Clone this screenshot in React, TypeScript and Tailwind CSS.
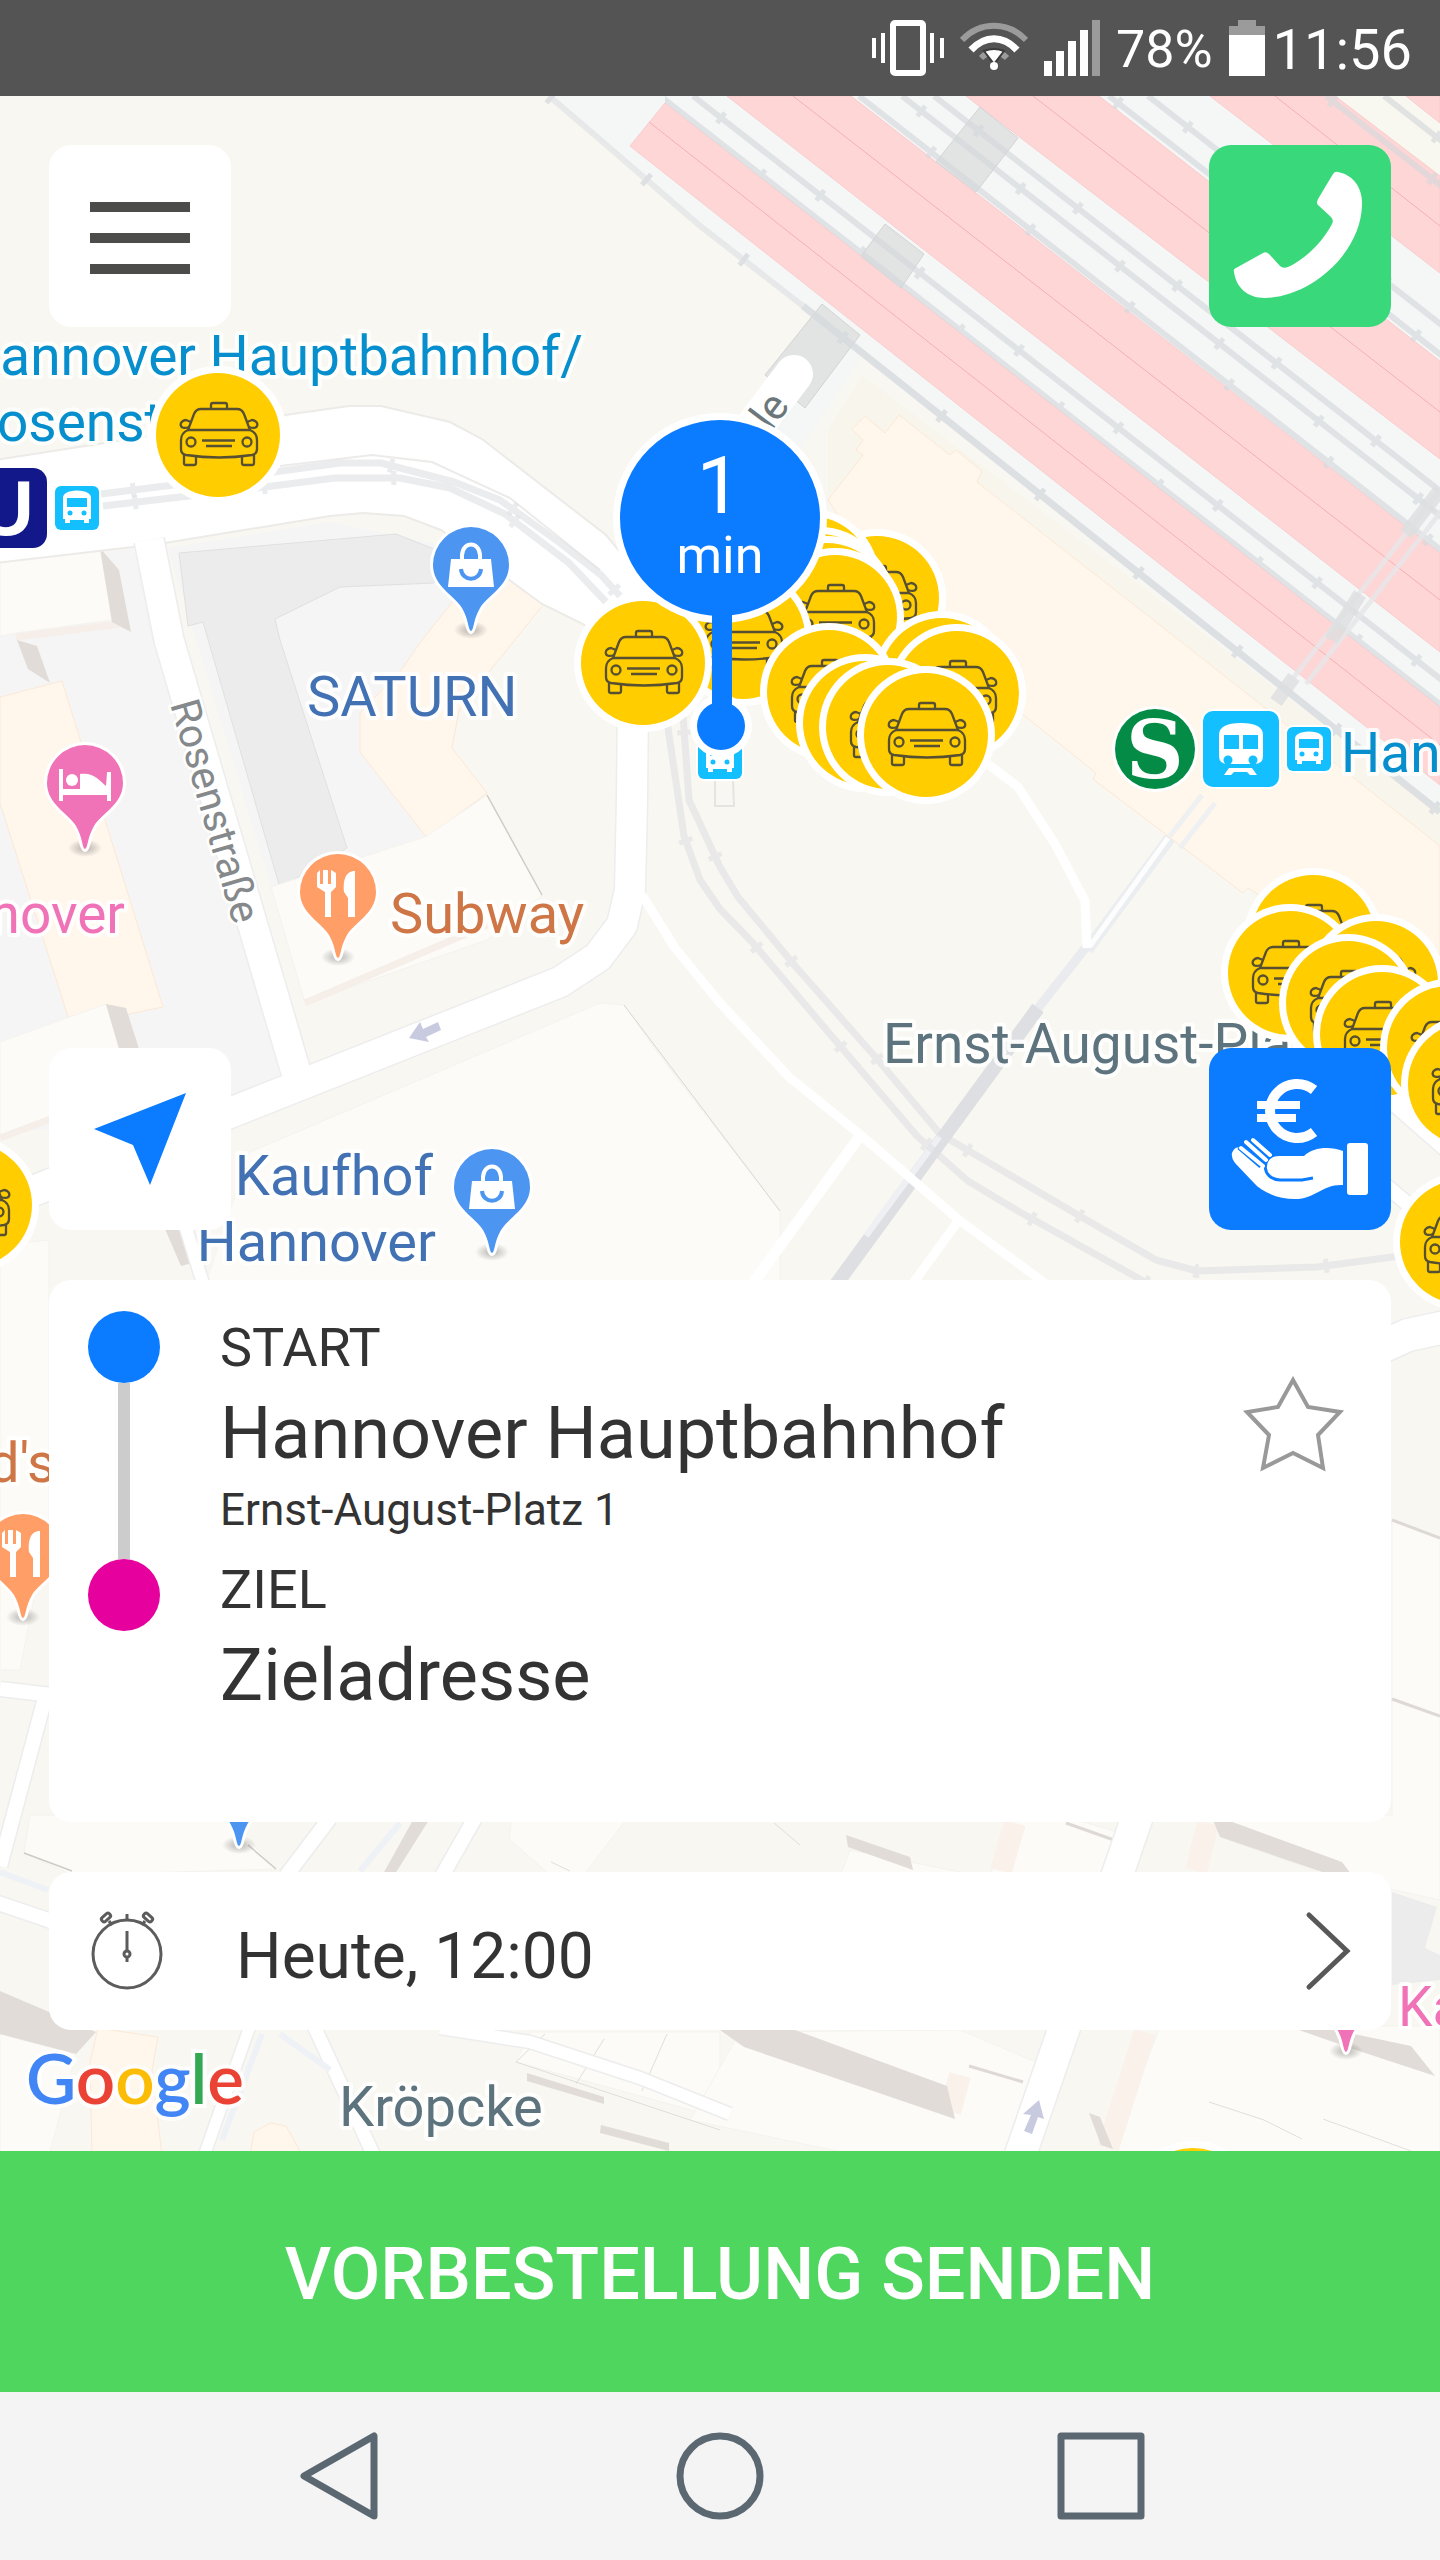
import React from 'react';

interface Point {
    x: number;
    y: number;
}

// Taxis in drawing order: later ones lie on top
const TAXIS: Point[] = [
    { x: 218, y: 435 },
    { x: 877, y: 598 },
    { x: 810, y: 578 },
    { x: 820, y: 596 },
    { x: 827, y: 605 },
    { x: 835, y: 617 },
    { x: 743, y: 637 },
    { x: 643, y: 663 },
    { x: 942, y: 680 },
    { x: 957, y: 693 },
    { x: 829, y: 692 },
    { x: 865, y: 723 },
    { x: 888, y: 727 },
    { x: 926, y: 735 },
    { x: 1313, y: 937 },
    { x: 1290, y: 973 },
    { x: 1376, y: 983 },
    { x: 1348, y: 1003 },
    { x: 1382, y: 1034 },
    { x: 1449, y: 1048 },
    { x: 1470, y: 1084 },
    { x: 1462, y: 1242 },
    { x: -30, y: 1205 },
    { x: 1193, y: 2210 },
];

const PLATFORMS = [
    '665,103 1440,707 1440,785 630,146',
    '727,96 851,96 1440,553 1440,652',
    '966,96 1099,96 1440,361 1440,459',
    '1210,96 1335,96 1440,176 1440,273',
    '1406,96 1440,96 1440,123',
];

const PLATFORM_LINES = [
    '649,122 1440,745',
    '793,96 1440,600',
    '1033,96 1440,412',
    '1275,96 1440,226',
];

// x position of each track at the top edge of the map
const TRACKS = [660, 693, 859, 902, 934, 1109, 1148, 1326, 1384];

const ROADS: { points: string; width: number }[] = [
    { points: '149,540 169,640 296,1072', width: 29 },
    { points: '634,600 632,800 630,890 622,925 598,957 560,982 270,1097 -20,1212', width: 30 },
    { points: '1138,1815 1020,2156', width: 31 },
    { points: '1375,1350 1408,1335 1450,1326', width: 32 },
    { points: '1370,1078 1450,1148', width: 22 },
    { points: '1370,1172 1450,1240', width: 14 },
    { points: '0,1689 60,1696', width: 14 },
    { points: '46,1694 0,1866', width: 14 },
    { points: '-5,1902 60,1924', width: 14 },
    { points: '186,1228 205,1290', width: 12 },
    { points: '330,1818 286,1876', width: 14 },
    { points: '475,1818 442,1876', width: 14 },
    { points: '250,2026 204,2156', width: 11 },
    { points: '314,2026 374,2156', width: 13 },
    { points: '440,2028 530,2042 640,2078 730,2114', width: 12 },
];

const PATHS: { points: string; width: number }[] = [
    { points: '980,758 1018,787 1055,844 1085,901 1087,948', width: 9 },
    { points: '642,895 675,948 720,1003 789,1077 862,1136 959,1220 1046,1284', width: 9 },
    { points: '860,1136 748,1290', width: 11 },
    { points: '959,1220 908,1290', width: 9 },
];

const TRAM_LINES = [
    '101,494 230,478 340,463 381,463 454,482 500,500 560,543 601,575 620,596',
    '103,506 257,488 335,478 400,478 450,488 505,514 569,563 606,602',
    '664,680 668,728 684,836 700,880 720,909 752,942 835,1040 917,1136 968,1181 1018,1211 1129,1273 1150,1285',
    '682,700 689,800 720,867 738,897 796,967 878,1060 940,1134 1078,1215 1156,1260 1197,1271 1317,1267 1400,1256',
];

const CREAM_BLOCKS = [
    '0,563 100,548 112,620 16,633 0,636',
    '0,1042 106,1004 130,1085 0,1138',
    '271,887 427,836 487,795 542,895 487,940 305,1003',
    '250,1152 600,1003 624,1005 666,1064 780,1211 780,1300 200,1300',
    '0,1245 49,1240 49,1520 20,1670 0,1670',
    '30,1815 225,1815 276,1869 72,1875 24,1853',
    '512,1815 630,1815 583,1876 551,1876 509,1839',
    '850,1850 1000,1880 1110,1880 1128,1835 1060,1815 1010,1815 990,1876 840,1876',
    '1220,1837 1330,1876 1440,1900 1440,1538 1392,1520 1392,1815 1225,1815',
    '530,2032 720,2032 720,2118 516,2062',
    '740,2032 690,2120 880,2160 1010,2160 1055,2070 960,2030',
    '1160,2026 1440,2026 1440,2160 1110,2160',
    '0,2034 76,2054 48,2160 0,2160',
];

const SHADOWS = [
    '100,548 119,570 131,632 112,622',
    '17,640 37,646 50,683 28,669',
    '106,1004 126,1008 140,1052 120,1052',
    '165,1229 181,1229 196,1262 181,1266',
    '0,1991 96,2032 76,2054 0,2034',
    '846,1835 910,1857 913,1870 848,1847',
    '1213,1820 1227,1820 1342,1862 1351,1874 1328,1874 1220,1837',
    '720,2030 795,2030 947,2086 955,2119 876,2092 744,2047',
    '527,2073 604,2097 604,2104 527,2081',
    '601,2125 669,2143 669,2151 600,2133',
    '1299,2030 1335,2030 1411,2046 1435,2076 1356,2050',
    '1089,2113 1100,2117 1113,2149 1101,2145',
    '413,1820 429,1820 395,1874 383,1874',
];

const PEACH_BLOCKS = [
    '0,697 62,681 163,1007 71,1026 0,803',
    '510,559 553,590 544,604 492,668 459,711 452,748 487,793 427,838 360,752 360,713 402,669 422,640 470,580',
    '828,500 863,455 856,450 863,440 852,429 865,416 885,433 899,415 950,455 956,450 982,471 977,482 1179,640 1440,846 1440,1040 1262,897 1248,888 1243,893 1093,779 1096,773 1021,713 900,610',
    '98,2028 158,2037 152,2071 162,2155 92,2155 90,2062',
    '250,2155 254,2132 270,2123 286,2126 302,2155',
];

const TaxiMarker: React.FC<Point> = ({ x, y }) => (
    <g transform={`translate(${x} ${y})`}>
        <circle r="69" fill="#fff" />
        <circle r="62" fill="#ffcd00" />
        <g fill="none" stroke="#564f31" strokeWidth="2.300" strokeLinejoin="round">
            <path d="M-7-27V-30Q-7-32-5-32H7Q9-32 9-30V-27" />
            <path d="M-30-5-24-21Q-22-26-17-26H19Q24-26 26-21L32-5Z" />
            <path d="M-29-8C-39-4-40-14-32-15L-27-13M31-8C41-4 42-14 34-15L29-13" />
            <path d="M-30-5Q-37-2-37 5V14Q-37 19-32 20Q1 25 34 20Q39 19 39 14V5Q39-2 32-5" />
            <circle cx="-27" cy="7" r="4.500" />
            <circle cx="29" cy="7" r="4.500" />
            <path d="M-16 5.500H17M-12 11H14" />
            <path d="M-34 20V28Q-34 30-32 30H-24Q-22 30-22 28V22M24 22V28Q24 30 26 30H34Q36 30 36 28V20" />
        </g>
    </g>
);

interface PoiPinProps extends Point {
    color: string;
    children?: React.ReactNode;
}

// The origin of a pin is its tip
const PoiPin: React.FC<PoiPinProps> = ({ x, y, color, children }) => (
    <g transform={`translate(${x} ${y})`}>
        <ellipse rx="17" ry="9" fill="url(#pin-shadow)" />
        <path
            d="M0 1C-3 0-2-10-9-22C-17-35-38-44-38-65A38 38 0 0 1 38-65C38-44 17-35 9-22C2-10 3 0 0 1Z"
            fill={color}
            stroke="#fff"
            strokeWidth="6"
            paintOrder="stroke"
        />
        {children}
    </g>
);

const BagGlyph = () => (
    <g>
        <path d="M-20-71H20L23-43H-23Z" fill="#fff" />
        <path d="M-9-70V-75C-8-89 8-89 9-75V-70" fill="none" stroke="#fff" strokeWidth="4" />
        <path d="M-10-61C-9-48 9-48 10-61" fill="none" stroke="#4c95f1" strokeWidth="4" />
    </g>
);

const ForkGlyph = () => (
    <g fill="#fff">
        <path d="M-21-84-18-87V-73H-15V-87H-10V-73H-7V-87L-2-84V-70L-7-65V-40H-13V-65L-21-70Z" />
        <path d="M17-86V-40H10V-59L6-65C5-76 7-86 17-86Z" />
    </g>
);

const BusSign: React.FC<Point> = ({ x, y }) => (
    <g transform={`translate(${x} ${y})`}>
        <rect width="44" height="44" rx="6" fill="#14bfff" stroke="#fff" strokeWidth="4" paintOrder="stroke" />
        <path d="M8 12Q8 5 22 4.500Q36 5 36 12V33H34V37H29V34H15V37H10V33H8Z" fill="#fff" />
        <path d="M12 12H32V21H12Z" fill="#14bfff" />
        <circle cx="15" cy="27" r="2.500" fill="#14bfff" />
        <circle cx="29" cy="27" r="2.500" fill="#14bfff" />
    </g>
);

const TrainSign: React.FC<Point> = ({ x, y }) => (
    <g transform={`translate(${x} ${y})`}>
        <rect width="76" height="76" rx="10" fill="#14bfff" stroke="#fff" strokeWidth="4" paintOrder="stroke" />
        <path d="M16 24Q16 12 38 12Q60 12 60 24V45Q60 53 51 53H25Q16 53 16 45Z" fill="#fff" />
        <path d="M21 24H36V38H21ZM40 24H55V38H40Z" fill="#14bfff" />
        <circle cx="25" cy="49" r="4.500" fill="#14bfff" />
        <circle cx="50" cy="49" r="4.500" fill="#14bfff" />
        <path d="M26 57H49L54 64H47L44 61H31L28 64H21Z" fill="#fff" />
    </g>
);

const CityMap = () => (
    <svg
        viewBox="0 96 1440 2055"
        preserveAspectRatio="xMidYMid slice"
        className="absolute inset-0 h-full w-full font-[Roboto,sans-serif]"
        role="img"
        aria-label="Karte Hannover Hauptbahnhof"
    >
        <defs>
            <clipPath id="yard">
                <polygon points="665,96 1440,96 1440,707 665,103" />
            </clipPath>
            <radialGradient id="pin-shadow">
                <stop offset="0.3" stopColor="#000" stopOpacity=".2" />
                <stop offset="1" stopColor="#000" stopOpacity="0" />
            </radialGradient>
        </defs>
        <rect x="-100" y="0" width="1700" height="2300" fill="#f8f7f2" />

        {/* Railway yard */}
        <polygon points="549,96 1440,96 1440,820 699,225 604,143" fill="#f5f6f6" />
        <polygon points="1335,96 1406,96 1440,123 1440,176" fill="#f8f7f0" />
        <polygon points="700,470 822,304 870,345 800,450" fill="#f5f6f6" />
        <polygon points="828,430 862,375 1440,812 1440,846 977,482 899,415 828,500" fill="#f8f6ec" />
        {PLATFORMS.map(points => (
            <polygon key={points} points={points} fill="#ffd6d6" stroke="#f9cccd" />
        ))}
        {PLATFORM_LINES.map(points => (
            <polyline key={points} points={points} stroke="#f3b0b3" fill="none" />
        ))}
        <g fill="#e2e3e3" stroke="#d3d5d5">
            <polygon points="980,107 1018,138 976,192 936,162" />
            <polygon points="885,224 924,254 901,288 861,256" />
            <polygon points="822,304 860,335 805,408 765,375" />
        </g>
        {TRACKS.map(x => (
            <g key={x} stroke="#d5d9dc" opacity=".65" clipPath="url(#yard)">
                <path d={`M${x} 96l1200 936`} strokeWidth="6" />
                <path d={`M${x} 96l1200 936`} strokeWidth="13" strokeDasharray="5 121" strokeDashoffset={-(x % 110)} />
            </g>
        ))}
        <g fill="none" stroke="#d8dbdf" opacity=".8">
            <polyline points="549,96 604,143 699,225 803,306" strokeWidth="6" opacity=".6" />
            <polyline points="803,306 904,386 1101,543 1204,625 1440,812" strokeWidth="7" />
            <polyline points="549,96 604,143 699,225 803,306 904,386 1101,543 1204,625 1440,812" strokeWidth="14" strokeDasharray="5 121" />
        </g>

        {/* City blocks */}
        <polygon points="0,570 133,548 281,1075 165,1130 0,1130" fill="#f5f5f6" />
        <polygon points="168,548 330,522 440,545 540,620 480,800 430,840 271,887" fill="#f5f5f5" />
        <polygon points="553,590 600,640 610,880 560,930 487,793 452,748 459,711 544,604" fill="#f8f7f2" />
        <polygon points="179,553 396,534 434,549 434,583 340,587 275,619 280,640 347,848 280,888 203,622 188,626" fill="#ececec" stroke="#e0e0e0" />
        <polygon points="1392,1892 1437,1907 1425,1948 1440,1955 1440,1980 1392,1985" fill="#ececec" />
        {PEACH_BLOCKS.map(points => (
            <polygon key={points} points={points} fill="#fff6ec" stroke="#fce8d6" />
        ))}
        {CREAM_BLOCKS.map(points => (
            <polygon key={points} points={points} fill="#fcfbf7" stroke="#f5f3ee" />
        ))}
        <path d="M16 637 120 624M0 1138 80 1108M305 1003 487 925" stroke="#f6eee8" strokeWidth="7" />
        <path d="M487 795 542 895M24 1853 72 1871M248 1845 276 1869" stroke="#cfccc5" strokeWidth="1.500" fill="none" />
        <path d="M624 1005 780 1211" stroke="#dad7d0" />
        <path d="M1392 1520 1440 1538M1392 1699 1440 1716M1066 1823 1114 1840M969 2066 1023 2082" stroke="#ded9d4" strokeWidth="3" />
        <path d="M551 1862 570 1871M516 2062 720 2130M545 2034 516 2062M604 2039 576 2084M667 2034 642 2091M774 1823 800 1845M1209 2102 1264 2120 1302 2139M1323 2119 1411 2151" stroke="#e2dfda" fill="none" />
        <path d="M1015 1823 1001 1871M1208 1823 1196 1871M1145 2032 1108 2148M960 2075 950 2112" stroke="#f9f1ea" strokeWidth="22" />
        {SHADOWS.map(points => (
            <polygon key={points} points={points} fill="#e1dcd7" />
        ))}

        {/* Streets */}
        <polygon
            points="-5,460 285,415 349,406 381,406 450,422 482,439 606,535 660,600 650,670 583,624 542,604 441,530 404,516 363,513 330,516 165,543 133,547 -5,563"
            fill="#fff"
            stroke="#ecebe8"
            strokeWidth="2"
        />
        <path d="M280 466 372 455 432 462 510 498 600 570" fill="none" stroke="#ecebe9" strokeWidth="2" />
        {ROADS.map(r => (
            <polyline key={r.points} points={r.points} fill="none" stroke="#ededed" strokeWidth={r.width + 3} strokeLinejoin="round" />
        ))}
        {ROADS.map(r => (
            <polyline key={r.points} points={r.points} fill="none" stroke="#fff" strokeWidth={r.width} strokeLinejoin="round" />
        ))}
        <g fill="none">
            <path d="M1440 490 1294 677M1450 500 1306 684" stroke="#e6e6e9" strokeWidth="5" opacity=".8" />
            <path d="M1440 490 1406 534M1360 594 1331 640M1294 677 1276 702" stroke="#dcdee0" strokeWidth="14" opacity=".8" />
            <path d="M1202 795 1170 836M1215 803 1180 848" stroke="#eef0f2" strokeWidth="5" />
            <path d="M1170 838 1087 950" stroke="#ebeef1" strokeWidth="12" />
            <path d="M1168 838 1090 946" stroke="#fdfdfd" strokeWidth="5" />
            <path d="M1087 946 1035 1012" stroke="#e9ebee" strokeWidth="9" />
            <path d="M1038 1008 832 1290" stroke="#dddfe2" strokeWidth="14" />
            <path d="M940 1136 866 1236" stroke="#eef0f4" strokeWidth="6" />
            <path d="M400 1823 360 1871M0 1872 48 1890M262 2034 222 2140M280 2034 330 2070" stroke="#eef1f6" strokeWidth="6" />
        </g>
        {PATHS.map(p => (
            <polyline key={p.points} points={p.points} fill="none" stroke="#fff" strokeWidth={p.width} strokeLinejoin="round" />
        ))}
        {TRAM_LINES.map(points => (
            <g key={points} fill="none" stroke="#dfe0e3" opacity=".6">
                <polyline points={points} strokeWidth="7" strokeLinejoin="round" />
                <polyline points={points} strokeWidth="14" strokeDasharray="5 125" strokeDashoffset="-30" />
            </g>
        ))}
        <path d="M715 780V806H734L733 780" fill="none" stroke="#e5e4e1" strokeWidth="2" />
        <path d="M794 374 735 452" stroke="#fff" strokeWidth="38" strokeLinecap="round" />
        <path d="M409 1038 420 1022 423 1029 438 1022 441 1030 426 1037 429 1042Z" fill="#c8cbe0" />
        <path d="M1039 2100 1044 2119 1038 2117 1032 2134 1024 2131 1031 2115 1023 2114Z" fill="#c8cbe0" />

        {/* Place labels */}
        <g fontSize="55" stroke="#fff" strokeOpacity=".85" strokeWidth="8" strokeLinejoin="round" paintOrder="stroke">
            <g fill="#078fcd">
                <text x="-39" y="375">Hannover Hauptbahnhof/</text>
                <text x="-37" y="441">Rosenstraße</text>
                <text x="1341" y="772">Hann</text>
            </g>
            <g fill="#4272b4" fontSize="56">
                <text x="307" y="716">SATURN</text>
                <text x="433" y="1195" textAnchor="end">Kaufhof</text>
                <text x="436" y="1261" textAnchor="end">Hannover</text>
            </g>
            <g fill="#cf7647" fontSize="56">
                <text x="390" y="933">Subway</text>
                <text x="56" y="1482" textAnchor="end">d's</text>
            </g>
            <g fill="#f073b7">
                <text x="125" y="933" textAnchor="end">nnover</text>
                <text x="1398" y="2026">Ka</text>
            </g>
            <g fill="#5d737e">
                <text x="883" y="1063">Ernst-August-Platz</text>
                <text x="339" y="2126" fontSize="56">Kröpcke</text>
            </g>
        </g>
        <text transform="translate(170 704) rotate(74)" fontSize="41" fill="#85898b" stroke="#fff" strokeWidth="5" paintOrder="stroke">Rosenstraße</text>
        <text transform="translate(771 432) rotate(-53)" fontSize="42" fill="#6b777b">le</text>

        {/* Stations */}
        <rect x="-33" y="468" width="80" height="80" rx="14" fill="#12178a" stroke="#fff" strokeWidth="4" paintOrder="stroke" />
        <text x="6" y="535" textAnchor="middle" fontSize="77" fill="#fff" className="font-['Liberation_Sans',sans-serif] font-bold">U</text>
        <BusSign x={55} y={486} />
        <circle cx="1155" cy="749" r="40" fill="#048c47" stroke="#fff" strokeWidth="6" paintOrder="stroke" />
        <text x="1155" y="778" textAnchor="middle" fontSize="80" fill="#fff" className="font-['DejaVu_Serif',serif] font-bold">S</text>
        <TrainSign x={1203} y={711} />
        <BusSign x={1287} y={727} />
        <BusSign x={698} y={735} />

        <PoiPin x={471} y={630} color="#4c95f1"><BagGlyph /></PoiPin>
        <PoiPin x={492} y={1252} color="#4c95f1"><BagGlyph /></PoiPin>
        <PoiPin x={338} y={957} color="#ff9e67"><ForkGlyph /></PoiPin>
        <PoiPin x={23} y={1617} color="#ff9e67"><ForkGlyph /></PoiPin>
        <PoiPin x={239} y={1845} color="#4c95f1" />
        <PoiPin x={1346} y={2051} color="#f073b7" />
        <PoiPin x={85} y={848} color="#f073b7">
            <g fill="#fff">
                <path d="M-26-79H-22V-59H22V-76H26V-47H22V-53H-22V-47H-26Z" />
                <circle cx="-13" cy="-68" r="6" />
                <path d="M-5-59V-74C9-76 15-67 21-62L22-75H26V-59Z" />
            </g>
        </PoiPin>

        {TAXIS.map(t => (
            <TaxiMarker key={`${t.x}-${t.y}`} x={t.x} y={t.y} />
        ))}

        {/* Pickup pin */}
        <g fill="#0b7bff" stroke="#fff" strokeWidth="14" paintOrder="stroke">
            <circle cx="721" cy="726" r="24" />
            <ellipse cx="720" cy="518" rx="100" ry="98" />
        </g>
        <path d="M712 606H732V722H712Z" fill="#0b7bff" />
        <text x="719" y="513" textAnchor="middle" fontSize="80" fill="#fff">1</text>
        <text x="720" y="573" textAnchor="middle" fontSize="52" fill="#fff">min</text>

        <text x="26" y="2104" fontSize="69" stroke="#fff" strokeOpacity=".8" strokeWidth="8" paintOrder="stroke" className="font-[Lato,sans-serif] font-semibold">
            <tspan fill="#4285f4">G</tspan>
            <tspan fill="#ea4335">o</tspan>
            <tspan fill="#fbbc05">o</tspan>
            <tspan fill="#4285f4">g</tspan>
            <tspan fill="#34a853">l</tspan>
            <tspan fill="#ea4335">e</tspan>
        </text>
    </svg>
);

const StatusBar = () => (
    <header className="flex h-24 items-center justify-end bg-[#545454] pr-7 text-white">
        <svg width="72" height="56" viewBox="0 0 72 56" fill="#fff" aria-hidden="true">
            <path d="M0 18H4V38H0ZM9 13H13V43H9ZM58 13H62V43H58ZM68 18H72V38H68Z" />
            <rect x="21" y="3" width="30" height="50" rx="2" fill="none" stroke="#fff" strokeWidth="6" />
        </svg>
        <svg width="68" height="56" viewBox="0 0 68 56" fill="none" className="ml-4" aria-hidden="true">
            <path d="M2 20C20 1 48 1 66 20" stroke="#9b9b9b" strokeWidth="6" />
            <path d="M11 30C25 15 43 15 57 30" stroke="#fff" strokeWidth="7" />
            <path d="M21 38C29 30 39 30 47 38" stroke="#9b9b9b" strokeWidth="6" />
            <path d="M24 31Q34 27 44 31L34 44Z" fill="#fff" stroke="#3c3c3c" strokeWidth="2" />
            <circle cx="34" cy="46" r="4" fill="#fff" />
        </svg>
        <svg width="56" height="56" viewBox="0 0 56 56" fill="#fff" className="ml-4" aria-hidden="true">
            <path d="M0 41H8V56H0ZM12 31H20V56H12ZM24 21H32V56H24ZM36 10H44V56H36Z" />
            <path d="M48 0H56V56H48Z" fill="#9b9b9b" />
        </svg>
        <span className="ml-4 pt-1 text-[52px] leading-none">78%</span>
        <svg width="36" height="56" viewBox="0 0 36 56" fill="#fff" className="ml-4" aria-hidden="true">
            <path d="M9 0H27V6H36V15H0V6H9Z" fill="#9b9b9b" />
            <path d="M0 15H36V56H0Z" />
        </svg>
        <span className="ml-2 pt-1 text-[56px] leading-none">11:56</span>
    </header>
);

const mapButton = 'flex size-[182px] items-center justify-center rounded-[22px]';

export default function App() {
    return (
        <div className="flex min-h-screen flex-col font-[Roboto,sans-serif] text-[#333]">
            <StatusBar />

            <main className="relative flex flex-1 flex-col overflow-hidden px-[49px] pt-[49px] pb-[121px]">
                <CityMap />

                <div className="relative flex justify-between">
                    <button aria-label="Menü" className={`${mapButton} bg-white`}>
                        <svg width="100" height="76" viewBox="0 -4 100 76" fill="#4c4c4a">
                            <path d="M0 0H100V10H0ZM0 31H100V41H0ZM0 62H100V72H0Z" />
                        </svg>
                    </button>
                    <button aria-label="Anrufen" className={`${mapButton} bg-[#39d87b]`}>
                        <svg width="134" height="130" viewBox="1232 170 134 130" fill="#fff">
                            <path d="M1337 171C1353 174 1362 188 1361 204C1360 252 1310 296 1264 297C1246 297 1235 286 1233 271Q1232 268 1235 267L1262 252Q1265 250 1268 253L1279 265Q1282 268 1287 266C1305 258 1322 240 1331 223Q1333 219 1330 216L1317 204Q1315 202 1317 198L1332 173Q1334 170 1337 171Z" />
                        </svg>
                    </button>
                </div>

                <div className="relative mt-auto flex justify-between">
                    <button aria-label="Mein Standort" className={`${mapButton} bg-white`}>
                        <svg width="92" height="92" viewBox="0 0 92 92" fill="#0b7bff">
                            <path d="M92 0 0 36 39 52 56 92Z" />
                        </svg>
                    </button>
                    <button aria-label="Bezahlen" className={`${mapButton} bg-[#0b7bff]`}>
                        <svg width="138" height="122" viewBox="1231 1078 138 122" fill="#fff">
                            <path d="M1314 1090A27 27 0 1 0 1314 1132" fill="none" stroke="#fff" strokeWidth="10" />
                            <path d="M1257 1101H1300V1109H1257ZM1257 1114H1296V1122H1257Z" />
                            <path d="M1232 1153Q1236 1144 1243 1150L1264 1166Q1268 1156 1279 1156H1304C1313 1147 1330 1146 1343 1151V1185C1322 1184 1316 1199 1295 1199C1278 1199 1262 1192 1254 1183L1235 1163Q1231 1158 1232 1153Z" />
                            <path d="M1277 1154C1261 1157 1261 1179 1280 1180H1302L1313 1178" fill="none" stroke="#0b7bff" strokeWidth="3" />
                            <path d="M1240 1146 1262 1165M1247 1142 1267 1160M1254 1140 1271 1156" stroke="#0b7bff" strokeWidth="8" />
                            <path d="M1241 1148 1263 1166M1246 1142 1266 1160M1253 1140 1270 1155" stroke="#fff" strokeWidth="4" strokeLinecap="round" />
                            <rect x="1347" y="1143" width="21" height="52" rx="3" />
                        </svg>
                    </button>
                </div>

                <section className="relative mt-[50px] flex items-start rounded-[22px] bg-white pr-[46px] pb-[102px] pl-[39px]">
                    <div className="flex flex-col items-center pt-[31px]">
                        <span className="size-[72px] rounded-full bg-[#0b7bff]" />
                        <span className="h-[176px] w-3 bg-[#ccc]" />
                        <span className="size-[72px] rounded-full bg-[#e6009e]" />
                    </div>
                    <div className="ml-[60px] flex flex-1 flex-col pt-9">
                        <button className="flex flex-col items-start text-left">
                            <span className="text-[54px] leading-[64px]">START</span>
                            <span className="mt-[10px] text-[72px] leading-[88px]">Hannover Hauptbahnhof</span>
                            <span className="mt-1 text-[44px] leading-[56px]">Ernst-August-Platz 1</span>
                        </button>
                        <button className="mt-5 flex flex-col items-start text-left">
                            <span className="text-[54px] leading-[64px]">ZIEL</span>
                            <span className="mt-[10px] text-[72px] leading-[88px]">Zieladresse</span>
                        </button>
                    </div>
                    <button aria-label="Zu Favoriten hinzufügen" className="mt-24">
                        <svg width="103" height="96" viewBox="0 0 103 96" fill="none" stroke="#999" strokeWidth="4">
                            <path d="M51 4 66 31 98 36 76 59 81 92 51 77 21 92 27 59 5 36 36 31Z" />
                        </svg>
                    </button>
                </section>

                <button className="relative mt-[50px] flex h-[158px] items-center rounded-[22px] bg-white pr-10 pl-[39px] text-left">
                    <svg width="78" height="80" viewBox="0 0 78 80" fill="none" stroke="#5c5c5c" strokeWidth="3" aria-hidden="true">
                        <circle cx="39" cy="43" r="34" />
                        <circle cx="39" cy="43" r="3" />
                        <path d="M39 20V40M39 46V51M39 3V9M21 10 24 14M57 10 54 14" />
                        <rect x="13" y="4" width="10" height="5" rx="2" transform="rotate(-42 18 6.500)" />
                        <rect x="55" y="4" width="10" height="5" rx="2" transform="rotate(42 60 6.500)" />
                    </svg>
                    <span className="ml-[70px] flex-1 pt-3 text-[64px] leading-[76px]">Heute, 12:00</span>
                    <svg width="46" height="80" viewBox="0 0 46 80" fill="none" stroke="#585858" strokeWidth="5" strokeLinecap="round" aria-hidden="true">
                        <path d="M4 4 42 40 4 76" />
                    </svg>
                </button>
            </main>

            <button className="bg-[#4fd65f] pt-20 pb-[73px] text-[72px] leading-[88px] font-medium text-white">
                VORBESTELLUNG SENDEN
            </button>

            <nav className="flex h-[168px] items-center justify-center gap-[293px] bg-[#f4f4f4]">
                <button aria-label="Zurück">
                    <svg width="88" height="88" viewBox="0 0 88 88" fill="none" stroke="#5b6872" strokeWidth="7" strokeLinejoin="round">
                        <path d="M79 4V84L9 44Z" />
                    </svg>
                </button>
                <button aria-label="Startseite">
                    <svg width="88" height="88" viewBox="0 0 88 88" fill="none" stroke="#5b6872" strokeWidth="7">
                        <circle cx="44" cy="44" r="40" />
                    </svg>
                </button>
                <button aria-label="Übersicht">
                    <svg width="88" height="88" viewBox="0 0 88 88" fill="none" stroke="#5b6872" strokeWidth="7" strokeLinejoin="round">
                        <path d="M4 4H84V84H4Z" />
                    </svg>
                </button>
            </nav>
        </div>
    );
}
